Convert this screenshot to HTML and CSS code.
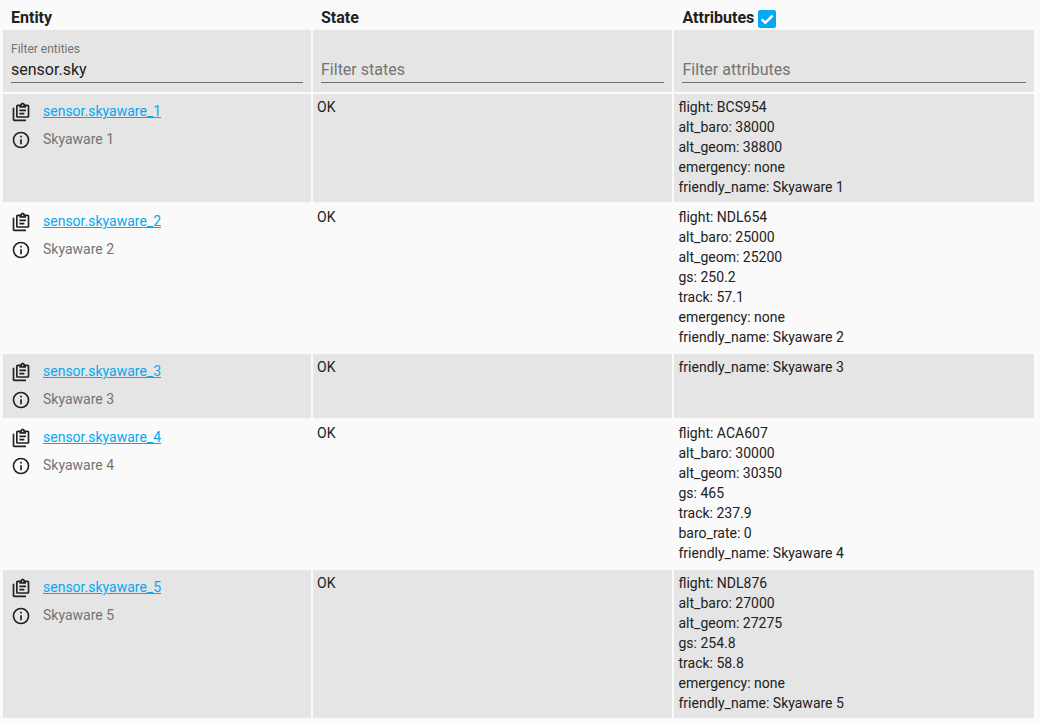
FILE: index.html
```html
<!DOCTYPE html>
<html lang="en">
<head>
  <meta charset="UTF-8" />
  <meta name="viewport" content="width=device-width, initial-scale=1.0">
  <title>States</title>
  <link rel="stylesheet" href="styles.css">
</head>
<body>
  <table class="entities">
    <colgroup>
      <col class="col-entity">
      <col class="col-state">
      <col class="col-attrs">
    </colgroup>
    <tr class="head">
      <th>Entity</th>
      <th>State</th>
      <th class="attrs">
        <span class="head-attrs">
          Attributes
          <span class="checkbox">
            <svg viewBox="0 0 18 18" width="18" height="18"><path d="M3.7 9.3L7.3 12.7L14.6 5.6" fill="none" stroke="#fff" stroke-width="2.5"/></svg>
          </span>
        </span>
      </th>
    </tr>
    <tr class="filters">
      <td>
        <div class="field">
          <span class="field-label">Filter entities</span>
          <span class="field-value">sensor.sky</span>
        </div>
      </td>
      <td>
        <div class="field"><span class="field-value placeholder">Filter states</span></div>
      </td>
      <td>
        <div class="field"><span class="field-value placeholder nudge">Filter attributes</span></div>
      </td>
    </tr>

    <tr class="row odd">
      <td>
        <div class="line">
          <svg class="icon" viewBox="0 0 24 24"><path d="M4 7V21H18V23H4C2.9 23 2 22.1 2 21V7H4M20 3C21.1 3 22 3.9 22 5V17C22 18.1 21.1 19 20 19H8C6.9 19 6 18.1 6 17V5C6 3.9 6.9 3 8 3H11.18C11.6 1.84 12.7 1 14 1C15.3 1 16.4 1.84 16.82 3H20M14 3C13.45 3 13 3.45 13 4C13 4.55 13.45 5 14 5C14.55 5 15 4.55 15 4C15 3.45 14.55 3 14 3M10 7V5H8V17H20V5H18V7H10M10 9H18V11H10V9M10 13H16V15H10V13Z"/></svg>
          <a href="#">sensor.skyaware_1</a>
        </div>
        <div class="line">
          <svg class="icon" viewBox="0 0 24 24"><path d="M11,9H13V7H11M12,20C7.59,20 4,16.41 4,12C4,7.59 7.59,4 12,4C16.41,4 20,7.59 20,12C20,16.41 16.41,20 12,20M12,2A10,10 0 0,0 2,12A10,10 0 0,0 12,22A10,10 0 0,0 22,12A10,10 0 0,0 12,2M11,17H13V11H11V17Z"/></svg>
          <span class="name">Skyaware 1</span>
        </div>
      </td>
      <td>OK</td>
      <td class="attrs">
        flight: BCS954<br>
        alt_baro: 38000<br>
        alt_geom: 38800<br>
        emergency: none<br>
        friendly_name: Skyaware 1
      </td>
    </tr>

    <tr class="row">
      <td>
        <div class="line">
          <svg class="icon" viewBox="0 0 24 24"><path d="M4 7V21H18V23H4C2.9 23 2 22.1 2 21V7H4M20 3C21.1 3 22 3.9 22 5V17C22 18.1 21.1 19 20 19H8C6.9 19 6 18.1 6 17V5C6 3.9 6.9 3 8 3H11.18C11.6 1.84 12.7 1 14 1C15.3 1 16.4 1.84 16.82 3H20M14 3C13.45 3 13 3.45 13 4C13 4.55 13.45 5 14 5C14.55 5 15 4.55 15 4C15 3.45 14.55 3 14 3M10 7V5H8V17H20V5H18V7H10M10 9H18V11H10V9M10 13H16V15H10V13Z"/></svg>
          <a href="#">sensor.skyaware_2</a>
        </div>
        <div class="line">
          <svg class="icon" viewBox="0 0 24 24"><path d="M11,9H13V7H11M12,20C7.59,20 4,16.41 4,12C4,7.59 7.59,4 12,4C16.41,4 20,7.59 20,12C20,16.41 16.41,20 12,20M12,2A10,10 0 0,0 2,12A10,10 0 0,0 12,22A10,10 0 0,0 22,12A10,10 0 0,0 12,2M11,17H13V11H11V17Z"/></svg>
          <span class="name">Skyaware 2</span>
        </div>
      </td>
      <td>OK</td>
      <td class="attrs">
        flight: NDL654<br>
        alt_baro: 25000<br>
        alt_geom: 25200<br>
        gs: 250.2<br>
        track: 57.1<br>
        emergency: none<br>
        friendly_name: Skyaware 2
      </td>
    </tr>

    <tr class="row odd">
      <td>
        <div class="line">
          <svg class="icon" viewBox="0 0 24 24"><path d="M4 7V21H18V23H4C2.9 23 2 22.1 2 21V7H4M20 3C21.1 3 22 3.9 22 5V17C22 18.1 21.1 19 20 19H8C6.9 19 6 18.1 6 17V5C6 3.9 6.9 3 8 3H11.18C11.6 1.84 12.7 1 14 1C15.3 1 16.4 1.84 16.82 3H20M14 3C13.45 3 13 3.45 13 4C13 4.55 13.45 5 14 5C14.55 5 15 4.55 15 4C15 3.45 14.55 3 14 3M10 7V5H8V17H20V5H18V7H10M10 9H18V11H10V9M10 13H16V15H10V13Z"/></svg>
          <a href="#">sensor.skyaware_3</a>
        </div>
        <div class="line">
          <svg class="icon" viewBox="0 0 24 24"><path d="M11,9H13V7H11M12,20C7.59,20 4,16.41 4,12C4,7.59 7.59,4 12,4C16.41,4 20,7.59 20,12C20,16.41 16.41,20 12,20M12,2A10,10 0 0,0 2,12A10,10 0 0,0 12,22A10,10 0 0,0 22,12A10,10 0 0,0 12,2M11,17H13V11H11V17Z"/></svg>
          <span class="name">Skyaware 3</span>
        </div>
      </td>
      <td>OK</td>
      <td class="attrs">friendly_name: Skyaware 3</td>
    </tr>

    <tr class="row">
      <td>
        <div class="line">
          <svg class="icon" viewBox="0 0 24 24"><path d="M4 7V21H18V23H4C2.9 23 2 22.1 2 21V7H4M20 3C21.1 3 22 3.9 22 5V17C22 18.1 21.1 19 20 19H8C6.9 19 6 18.1 6 17V5C6 3.9 6.9 3 8 3H11.18C11.6 1.84 12.7 1 14 1C15.3 1 16.4 1.84 16.82 3H20M14 3C13.45 3 13 3.45 13 4C13 4.55 13.45 5 14 5C14.55 5 15 4.55 15 4C15 3.45 14.55 3 14 3M10 7V5H8V17H20V5H18V7H10M10 9H18V11H10V9M10 13H16V15H10V13Z"/></svg>
          <a href="#">sensor.skyaware_4</a>
        </div>
        <div class="line">
          <svg class="icon" viewBox="0 0 24 24"><path d="M11,9H13V7H11M12,20C7.59,20 4,16.41 4,12C4,7.59 7.59,4 12,4C16.41,4 20,7.59 20,12C20,16.41 16.41,20 12,20M12,2A10,10 0 0,0 2,12A10,10 0 0,0 12,22A10,10 0 0,0 22,12A10,10 0 0,0 12,2M11,17H13V11H11V17Z"/></svg>
          <span class="name">Skyaware 4</span>
        </div>
      </td>
      <td>OK</td>
      <td class="attrs">
        flight: ACA607<br>
        alt_baro: 30000<br>
        alt_geom: 30350<br>
        gs: 465<br>
        track: 237.9<br>
        baro_rate: 0<br>
        friendly_name: Skyaware 4
      </td>
    </tr>

    <tr class="row odd">
      <td>
        <div class="line">
          <svg class="icon" viewBox="0 0 24 24"><path d="M4 7V21H18V23H4C2.9 23 2 22.1 2 21V7H4M20 3C21.1 3 22 3.9 22 5V17C22 18.1 21.1 19 20 19H8C6.9 19 6 18.1 6 17V5C6 3.9 6.9 3 8 3H11.18C11.6 1.84 12.7 1 14 1C15.3 1 16.4 1.84 16.82 3H20M14 3C13.45 3 13 3.45 13 4C13 4.55 13.45 5 14 5C14.55 5 15 4.55 15 4C15 3.45 14.55 3 14 3M10 7V5H8V17H20V5H18V7H10M10 9H18V11H10V9M10 13H16V15H10V13Z"/></svg>
          <a href="#">sensor.skyaware_5</a>
        </div>
        <div class="line">
          <svg class="icon" viewBox="0 0 24 24"><path d="M11,9H13V7H11M12,20C7.59,20 4,16.41 4,12C4,7.59 7.59,4 12,4C16.41,4 20,7.59 20,12C20,16.41 16.41,20 12,20M12,2A10,10 0 0,0 2,12A10,10 0 0,0 12,22A10,10 0 0,0 22,12A10,10 0 0,0 12,2M11,17H13V11H11V17Z"/></svg>
          <span class="name">Skyaware 5</span>
        </div>
      </td>
      <td>OK</td>
      <td class="attrs">
        flight: NDL876<br>
        alt_baro: 27000<br>
        alt_geom: 27275<br>
        gs: 254.8<br>
        track: 58.8<br>
        emergency: none<br>
        friendly_name: Skyaware 5
      </td>
    </tr>
  </table>
</body>
</html>
```

FILE: styles.css
```css
html {
  overflow: hidden;
}
body {
  font-family: Roboto, "Noto Sans", sans-serif;
  font-size: 14px;
  line-height: 20px;
  color: #212121;
  background: #fafafa;
  margin: 0;
  height: 723px;
}
.entities {
  border-collapse: separate;
  border-spacing: 2px;
  table-layout: fixed;
  width: 1035px;
  margin: -2px 0 0 1px;
}
.col-entity {
  width: 308px;
}
.col-state {
  width: 359px;
}
.col-attrs {
  width: 360px;
}
th {
  height: 28px;
  padding: 8px 8px 0;
  box-sizing: border-box;
  font-size: 16px;
  font-weight: 700;
  text-align: left;
}
th.attrs {
  padding-left: 8.5px;
}
.head-attrs {
  display: flex;
  align-items: center;
  gap: 4px;
}
.checkbox {
  display: flex;
  width: 18px;
  height: 18px;
  margin-top: 2px;
  background: #03a9f4;
  border-radius: 2px;
}
.filters td {
  height: 62px;
  padding: 0 8px;
  background: #e5e5e5;
  vertical-align: top;
}
.field {
  display: flex;
  flex-direction: column;
  justify-content: flex-end;
  height: 52px;
  border-bottom: 1px solid #6f6f6f;
}
.field-label {
  font-size: 12px;
  line-height: 16px;
  color: #737373;
  margin-bottom: 1px;
}
.field-value {
  font-size: 16px;
  line-height: 24px;
}
.placeholder {
  color: #737373;
}
.nudge {
  padding-left: 0.5px;
}
.row td {
  padding: 3px 4px 5px;
  vertical-align: top;
}
.row td.attrs {
  padding-left: 4.5px;
}
.row.odd td {
  background: #e5e5e5;
}
.line {
  display: flex;
  align-items: center;
  height: 28px;
  gap: 12px;
  padding-left: 4px;
}
.icon {
  width: 20px;
  height: 20px;
  margin-top: 2px;
  fill: #212121;
  flex: none;
}
a {
  color: #03a9f4;
}
.name {
  color: #737373;
}
```
